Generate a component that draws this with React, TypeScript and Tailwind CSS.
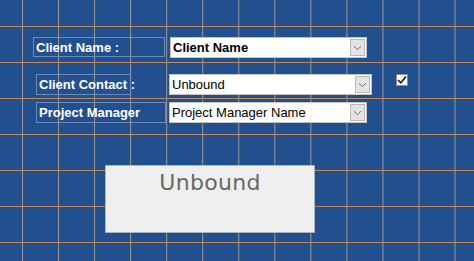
export default function App() {
  return (
    <div className="relative w-[474px] h-[261px] overflow-hidden bg-[#22508f] bg-[linear-gradient(to_bottom,#bf8a5c_1px,transparent_1px),linear-gradient(to_right,#9f9894_1px,transparent_1px)] bg-[size:36.05px_36px] bg-[position:22px_26px] font-['Liberation_Sans',Arial,sans-serif]">
      <div className="flex flex-col pt-[37px] pl-[33px]">
        {/* Client name row */}
        <div className="flex items-start">
          <Label text="Client Name :" className="w-[132px] h-[20px]" />
          <Combo text="Client Name" bold className="ml-[5px] w-[197px] h-[21px]" />
        </div>

        {/* Client contact row */}
        <div className="flex items-start mt-[16px]">
          <Label text="Client Contact :" className="ml-[3px] w-[95px] h-[21px]" />
          <Combo text="Unbound" className="ml-[38px] w-[203px] h-[21px]" />
          <div className="ml-[24px] w-[12px] h-[12px] bg-white border border-[#8a8a8a] flex items-center justify-center">
            <svg width="10" height="10" viewBox="0 0 10 10">
              <path d="M1 5 L3.8 7.8 L9 1.6" fill="none" stroke="#1a1a1a" strokeWidth="1.6" />
            </svg>
          </div>
        </div>

        {/* Project manager row */}
        <div className="flex items-start mt-[7px]">
          <Label text="Project Manager" className="ml-[3px] w-[130px] h-[21px]" />
          <Combo text="Project Manager Name" className="ml-[3px] w-[198px] h-[21px]" />
        </div>

        {/* unbound text box */}
        <div className="mt-[42px] ml-[72px] w-[210px] h-[68px] bg-[#efefef] border border-[#a9b3c2] flex justify-center">
          <span className="mt-[3px] text-[22px] leading-[28px] text-[#686868] font-['DejaVu_Sans',sans-serif] tracking-[0.3px]">
            Unbound
          </span>
        </div>
      </div>
    </div>
  );
}

function Label({ text, className }: { text: string; className: string }) {
  return (
    <div className={`flex items-center border border-[#6c8cbf] pl-[2px] ${className}`}>
      <span className="text-[13px] font-bold text-white leading-none whitespace-nowrap">{text}</span>
    </div>
  );
}

function Combo({ text, bold, className }: { text: string; bold?: boolean; className: string }) {
  return (
    <div className={`flex bg-white border border-[#c4c4c4] ${className}`}>
      <div className="flex-1 flex items-center pl-[2px]">
        <span className={`text-[13px] text-black leading-none whitespace-nowrap ${bold ? "font-bold" : ""}`}>{text}</span>
      </div>
      <div className="w-[15px] m-[1px] bg-[#e4e4e4] border border-[#b9b9b9] flex items-center justify-center">
        <svg width="9" height="6" viewBox="0 0 9 6">
          <path d="M1 1.2 L4.5 4.6 L8 1.2" fill="none" stroke="#6e6e6e" strokeWidth="1" />
        </svg>
      </div>
    </div>
  );
}
